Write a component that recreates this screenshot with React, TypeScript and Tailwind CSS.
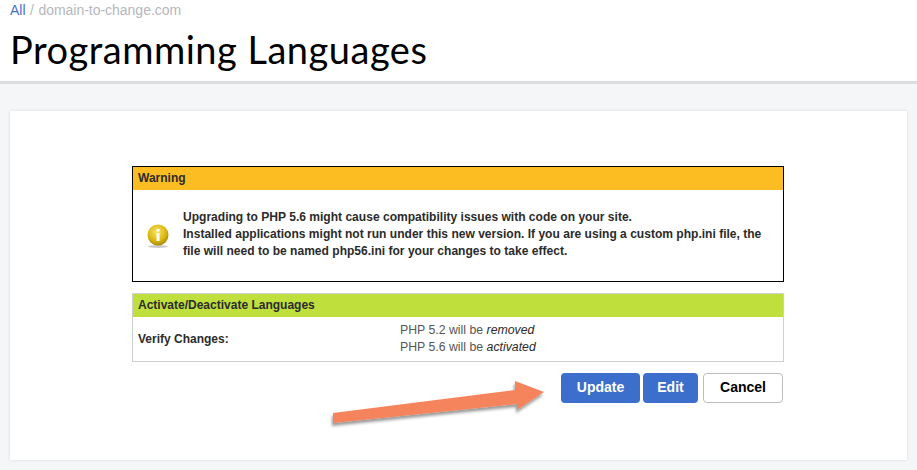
export default function App() {
  return (
    <div className="relative w-[917px] h-[470px] overflow-hidden bg-[#f5f6f8] font-['Liberation_Sans',Arial,sans-serif]">
      <header className="h-[84px] bg-white border-b-[3px] border-[#dcdddf] pl-[10px]">
        <div className="h-[21px] flex items-center gap-[4.5px] text-[14px] leading-[21px] tracking-[-0.02px] text-[#b4b7bd]">
          <span className="text-[#4a6fc9]">All</span>
          <span>/</span>
          <span>domain-to-change.com</span>
        </div>
        <h1 className="mt-[5px] font-['Lato',sans-serif] text-[38px] leading-[46px] text-black tracking-[0.5px]">Programming Languages</h1>
      </header>
      <main className="px-[10px] pt-[27px]">
        <section className="h-[349px] bg-white shadow-[0_0_3px_rgba(0,0,0,0.12)] pt-[55px] pl-[122px] pr-[123px]">
          <div className="h-[116px] border border-black flex flex-col">
            <div className="h-[23px] bg-[#fbbd22] px-[5px] text-[12px] font-bold leading-[23px] text-[#2b2b2b]">Warning</div>
            <div className="flex-1 flex items-center">
              <svg width="24" height="26" viewBox="0 0 24 26" className="ml-[13px] mr-[13px] shrink-0">
                <defs>
                  <radialGradient id="g" cx="45%" cy="35%" r="65%">
                    <stop offset="0%" stopColor="#f7e56a" />
                    <stop offset="65%" stopColor="#dcb912" />
                    <stop offset="100%" stopColor="#a98a08" />
                  </radialGradient>
                </defs>
                <ellipse cx="12" cy="23.5" rx="10" ry="1.5" fill="#c9c9c9" />
                <circle cx="12" cy="12" r="10.5" fill="url(#g)" />
                <rect x="10.5" y="10" width="3" height="8" fill="#fff" />
                <rect x="10.5" y="6" width="3" height="2.6" fill="#fff" />
              </svg>
              <p className="text-[12.06px] font-bold leading-[17px] text-[#2b2b2b] mt-[-2px]">
                Upgrading to PHP 5.6 might cause compatibility issues with code on your site.<br />
                Installed applications might not run under this new version. If you are using a custom php.ini file, the<br />
                file will need to be named php56.ini for your changes to take effect.
              </p>
            </div>
          </div>
          <div className="mt-[11px] h-[69px] border border-[#cfcfcf] flex flex-col">
            <div className="h-[23px] bg-[#bfe03c] px-[5px] text-[12px] font-bold leading-[22px] text-[#2b2b2b]">Activate/Deactivate Languages</div>
            <div className="flex-1 flex items-center">
              <div className="w-[267px] pl-[5px] text-[12px] font-bold text-[#2b2b2b]">Verify Changes:</div>
              <div className="text-[12.3px] leading-[17px] text-[#555]">
                <div>PHP 5.2 will be <em className="text-[#2b2b2b]">removed</em></div>
                <div>PHP 5.6 will be <em className="text-[#2b2b2b]">activated</em></div>
              </div>
            </div>
          </div>
          <div className="mt-[11px] mr-[1px] flex justify-end">
            <button className="h-[30px] w-[79px] pb-[1px] rounded-[4px] bg-[#3b6fcb] text-white text-[14px] font-bold">Update</button>
            <button className="ml-[3px] h-[30px] w-[55px] pb-[1px] rounded-[4px] bg-[#3b6fcb] text-white text-[14px] font-bold">Edit</button>
            <button className="ml-[5px] h-[30px] w-[80px] pb-[1px] rounded-[4px] bg-white border border-[#bdbdbd] text-black text-[14px] font-bold">Cancel</button>
          </div>
        </section>
      </main>
      <svg className="absolute left-[325px] top-[375px]" width="230" height="60" viewBox="325 375 230 60">
        <defs>
          <filter id="s" x="-10%" y="-30%" width="120%" height="160%">
            <feDropShadow dx="-1" dy="3" stdDeviation="1.5" floodColor="#000" floodOpacity="0.4" />
          </filter>
        </defs>
        <polygon points="333,413 515,390 515,381 544,392 517,410 517,404 333,423" fill="#f5845c" filter="url(#s)" />
      </svg>
    </div>
  );
}
